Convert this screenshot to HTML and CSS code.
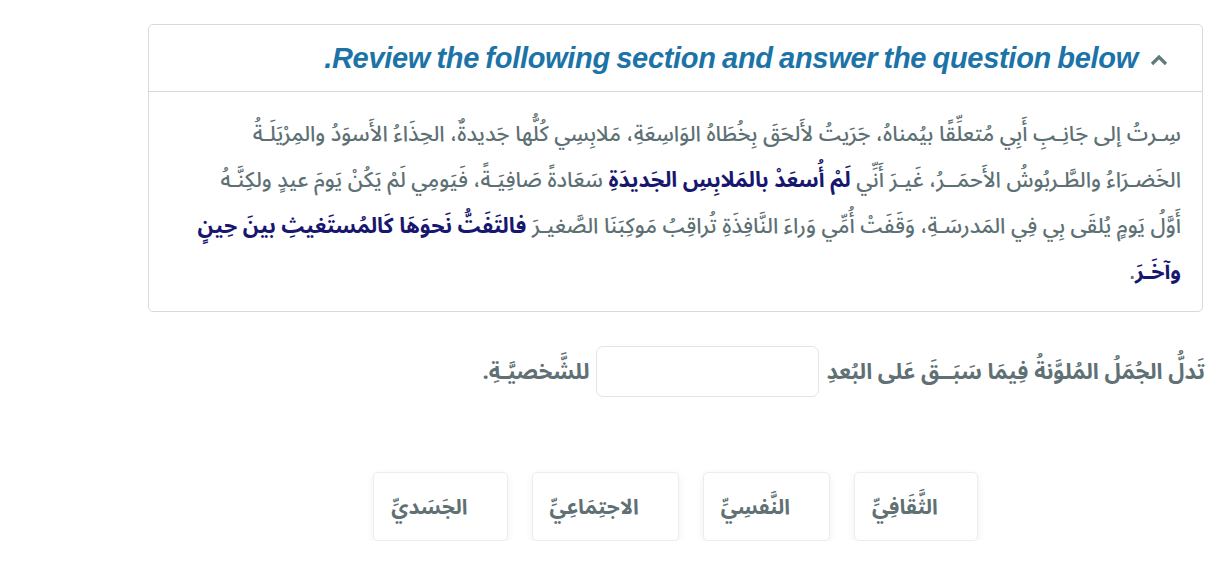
FILE: index.html
```html
<!DOCTYPE html>
<html lang="ar">
<head>
<meta charset="utf-8">
<link rel="stylesheet" href="styles.css">
</head>
<body>
<div class="page">
  <section class="card">
    <header class="card-head">
      <h2 class="title">.Review the following section and answer the question below</h2>
      <svg class="chev" width="18" height="12" viewBox="0 0 18 12"><path d="M2 10 L9 3 L16 10" fill="none" stroke="#607a7d" stroke-width="3.2"/></svg>
    </header>
    <div class="card-body" dir="rtl">
      <p class="passage">سِـرتُ إلى جَانِـبِ أَبِي مُتعلِّقًا بيُمناهُ، جَرَيتُ لأَلحَقَ بِخُطَاهُ الوَاسِعَةِ، مَلابِسِي كُلُّها جَديدةٌ، الحِذَاءُ الأَسوَدُ والمِرْيَلَـةُ<br>الخَضـرَاءُ والطَّـربُوشُ الأَحمَــرُ، غَيـرَ أَنِّي <b>لَمْ أُسعَدْ بالمَلابِسِ الجَديدَةِ</b> سَعَادةً صَافِيَـةً، فَيَومِي لَمْ يَكُنْ يَومَ عيدٍ ولكِنَّـهُ<br>أَوَّلُ يَومٍ يُلقَى بِي فِي المَدرسَـةِ، وَقَفَتْ أُمِّي وَراءَ النَّافِذَةِ تُراقِبُ مَوكِبَنَا الصَّغيـرَ <b>فالتَفَتُّ نَحوَهَا كَالمُستَغيثِ بينَ حِينٍ</b><br><b>وآخَـرَ</b>.</p>
    </div>
  </section>

  <div class="question" dir="rtl">
    <span class="q-text">تَدلُّ الجُمَلُ المُلوَّنةُ فِيمَا سَبَــقَ عَلى البُعدِ</span>
    <span class="blank"></span>
    <span class="q-text">للشَّخصيَّـةِ.</span>
  </div>

  <div class="options" dir="rtl">
    <button class="opt">الثَّقَافِيِّ</button>
    <button class="opt">النَّفسِيِّ</button>
    <button class="opt">الاجتِمَاعِيِّ</button>
    <button class="opt">الجَسَديِّ</button>
  </div>
</div>
</body>
</html>
```
FILE: styles.css
```css
* { box-sizing: border-box; }
html, body { margin: 0; padding: 0; background: #fff; }
body { font-family: "Noto Sans Arabic", "Noto Naskh Arabic", "DejaVu Sans", sans-serif; }
.page { padding: 24px 27px 0 148px; }
.card {
  border: 1px solid #d9d9d9;
  border-radius: 5px;
}
.card-head {
  height: 67px;
  border-bottom: 1px solid #d9d9d9;
  display: flex;
  align-items: center;
  justify-content: flex-end;
  gap: 12px;
  padding-right: 34px;
}
.title {
  margin: 0;
  font-family: "Liberation Sans", Arial, sans-serif;
  font-style: italic;
  font-weight: 700;
  font-size: 29px;
  letter-spacing: -0.3px;
  word-spacing: -1.4px;
  color: #1b73a7;
  white-space: nowrap;
}
.chev { margin-top: 4px; }
.card-body { padding: 19px 21px 16px 20px; }
.passage {
  margin: 0;
  font-size: 21.5px;
  font-weight: 500;
  line-height: 46px;
  color: #5d7074;
  white-space: nowrap;
}
.passage b { color: #17176f; font-weight: 700; }
.question {
  display: flex;
  align-items: center;
  gap: 7px;
  margin-top: 34px;
  margin-right: -2px;
  font-size: 22px;
  font-weight: 700;
  color: #5f7174;
}
.blank {
  width: 223px;
  height: 51px;
  border: 1.5px solid #e4e4e4;
  border-radius: 7px;
}
.options {
  display: flex;
  justify-content: center;
  gap: 24px;
  margin-top: 75px;
}
.opt {
  height: 69px;
  padding: 0 39px 0 17px;
  background: #fff;
  border: 1px solid #ececec;
  border-radius: 5px;
  box-shadow: 0 2px 8px rgba(0,0,0,0.06);
  font-family: "Noto Sans Arabic", "DejaVu Sans", sans-serif;
  font-size: 21px;
  font-weight: 700;
  color: #5f7174;
}
```
